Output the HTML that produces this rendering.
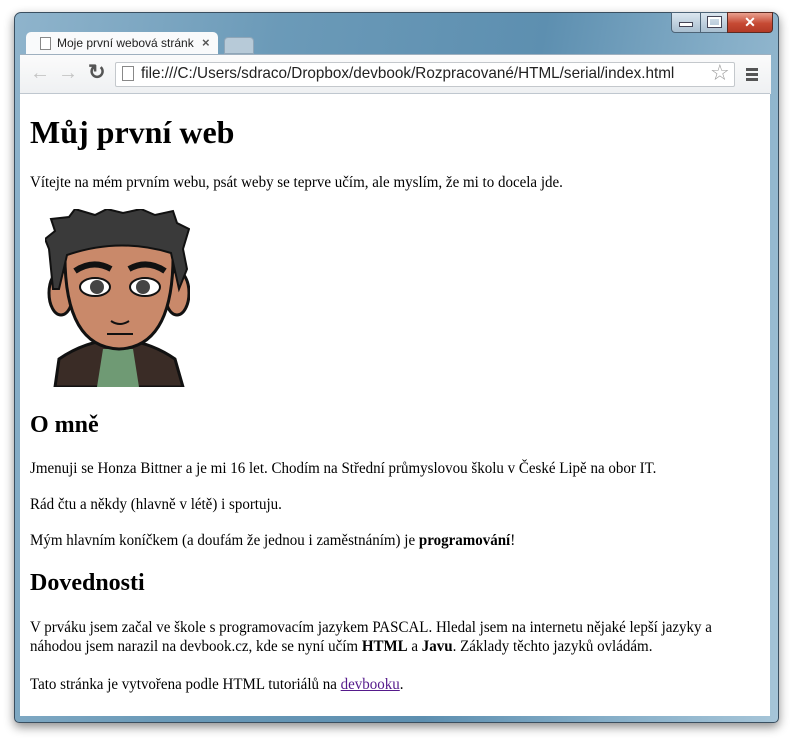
<!DOCTYPE html>
<html><head><meta charset="utf-8"><style>
body{margin:0;width:790px;height:741px;background:#fff;position:relative;overflow:hidden;font-family:"Liberation Serif",serif;}
.win{position:absolute;left:14px;top:12px;width:763px;height:709px;border-radius:7px 7px 5px 5px;background:linear-gradient(100deg,#8fb4cc 0%,#6b9ab8 30%,#5d8fb0 60%,#84adc7 80%,#a6c5d8 100%);border:1px solid #3a4f60;box-shadow:0 4px 10px rgba(0,0,0,.45);}
.toolbar{position:absolute;left:20px;top:54px;width:751px;height:39px;background:linear-gradient(#fbfbfb,#eef0f2);border-top:1px solid #9fb0bf;}
.content{position:absolute;left:20px;top:93px;width:750px;height:622px;background:#fff;border-top:1px solid #bfc7cf;}
.tab{position:absolute;left:26px;top:32px;width:192px;height:23px;background:#f9fafb;border-radius:5px 5px 0 0;font:12px "Liberation Sans",sans-serif;color:#222;}
.t{position:absolute;white-space:nowrap;color:#000;}
p.t{margin:0;font-size:16px;transform:scaleX(0.937);transform-origin:0 0;}
</style></head><body>
<div class="win"></div>
<div style="position:absolute;left:671px;top:12px;width:28px;height:19px;background:linear-gradient(#dbe6ef,#a9bfd0);border:1px solid #4d6477;border-radius:0 0 0 4px;"></div>
<div style="position:absolute;left:700px;top:12px;width:26px;height:19px;background:linear-gradient(#dbe6ef,#a9bfd0);border:1px solid #4d6477;"></div>
<div style="position:absolute;left:727px;top:12px;width:44px;height:19px;background:linear-gradient(#e9a08f,#c64a34 55%,#b33a26);border:1px solid #5b2a22;border-radius:0 0 4px 0;color:#fff;font:bold 14px 'Liberation Sans',sans-serif;text-align:center;line-height:19px;">✕</div>
<div style="position:absolute;left:679px;top:22px;width:12px;height:3px;background:#fff;border:1px solid #445;"></div>
<div style="position:absolute;left:708px;top:17px;width:9px;height:6px;border:2px solid #fff;outline:1px solid #445;"></div>
<div class="tab"><span style="position:absolute;left:14px;top:5px;width:9px;height:11px;border:1px solid #888;background:#fff"></span><span style="position:absolute;left:31px;top:4px">Moje první webová stránk</span><span style="position:absolute;left:176px;top:3px;color:#555;font-size:13px;font-weight:bold">×</span></div>
<div style="position:absolute;left:224px;top:37px;width:28px;height:15px;background:#b7cad8;border-radius:4px 4px 0 0;border:1px solid #8fa6b8;"></div>
<div class="toolbar"></div>
<div class="t" style="left:30px;top:62px;font:20px 'Liberation Sans',sans-serif;color:#c4c4c4">←</div>
<div class="t" style="left:58px;top:62px;font:20px 'Liberation Sans',sans-serif;color:#c4c4c4">→</div>
<div class="t" style="left:88px;top:60px;font:bold 21px 'Liberation Sans',sans-serif;color:#555">↻</div>
<div style="position:absolute;left:115px;top:62px;width:618px;height:23px;background:#fff;border:1px solid #c4c8cc;border-radius:2px;"></div>
<div style="position:absolute;left:122px;top:66px;width:10px;height:13px;border:1px solid #888;background:#fff"></div>
<div class="t" style="left:141px;top:65px;font:16px 'Liberation Sans',sans-serif;color:#222;transform:scaleX(0.955);transform-origin:0 0">file:///C:/Users/sdraco/Dropbox/devbook/Rozpracované/HTML/serial/index.html</div>
<div class="t" style="left:710px;top:61px;font:22px 'DejaVu Sans',sans-serif;color:#999">☆</div>
<div style="position:absolute;left:746px;top:68px;width:12px;height:3px;background:#555;box-shadow:0 5px #555,0 10px #555"></div>
<div class="content"></div>
<div class="t" style="left:30px;top:114px;font-weight:bold;font-size:32px">Můj první web</div>
<p class="t" style="left:30px;top:174px">Vítejte na mém prvním webu, psát weby se teprve učím, ale myslím, že mi to docela jde.</p>
<svg style="position:absolute;left:45px;top:209px" width="145" height="178" viewBox="0 0 145 178">
<path d="M10 178 L14 150 Q40 132 72 130 Q104 132 130 150 L138 178Z" fill="#3a2c26" stroke="#111" stroke-width="3"/>
<path d="M52 178 L58 140 L88 140 L94 178Z" fill="#6f9a74"/>
<ellipse cx="16" cy="84" rx="12" ry="22" fill="#c9896a" stroke="#111" stroke-width="3"/>
<ellipse cx="132" cy="84" rx="12" ry="22" fill="#c9896a" stroke="#111" stroke-width="3"/>
<path d="M20 40 Q18 138 74 140 Q130 138 128 40 Q74 20 20 40Z" fill="#c9896a" stroke="#111" stroke-width="3"/>
<path d="M8 80 L4 40 L0 30 L10 22 L6 10 L24 8 L30 0 L50 6 L62 0 L78 4 L96 0 L110 6 L128 2 L132 14 L144 20 L138 40 L142 60 L134 80 L126 44 Q74 28 22 46 L14 80Z" fill="#3a3a3a" stroke="#111" stroke-width="2"/>
<ellipse cx="50" cy="78" rx="15" ry="9" fill="#fff" stroke="#111" stroke-width="2"/>
<ellipse cx="100" cy="78" rx="15" ry="9" fill="#fff" stroke="#111" stroke-width="2"/>
<circle cx="52" cy="78" r="7" fill="#444"/><circle cx="98" cy="78" r="7" fill="#444"/>
<path d="M30 62 Q48 50 66 60 M84 60 Q102 50 120 62" stroke="#111" stroke-width="6" fill="none"/>
<path d="M66 112 Q75 118 84 112" stroke="#111" stroke-width="2" fill="none"/>
<path d="M62 125 L88 125" stroke="#111" stroke-width="2"/>
</svg>
<div class="t" style="left:30px;top:412px;font-weight:bold;font-size:24px">O mně</div>
<p class="t" style="left:30px;top:460px">Jmenuji se Honza Bittner a je mi 16 let. Chodím na Střední průmyslovou školu v České Lipě na obor IT.</p>
<p class="t" style="left:30px;top:496px">Rád čtu a někdy (hlavně v létě) i sportuju.</p>
<p class="t" style="left:30px;top:532px">Mým hlavním koníčkem (a doufám že jednou i zaměstnáním) je <b>programování</b>!</p>
<div class="t" style="left:30px;top:570px;font-weight:bold;font-size:24px">Dovednosti</div>
<p class="t" style="left:30px;top:619px">V prváku jsem začal ve škole s programovacím jazykem PASCAL. Hledal jsem na internetu nějaké lepší jazyky a</p>
<p class="t" style="left:30px;top:638px">náhodou jsem narazil na devbook.cz, kde se nyní učím <b>HTML</b> a <b>Javu</b>. Základy těchto jazyků ovládám.</p>
<p class="t" style="left:30px;top:676px">Tato stránka je vytvořena podle HTML tutoriálů na <span style="color:#551a8b;text-decoration:underline">devbooku</span>.</p>
</body></html>
